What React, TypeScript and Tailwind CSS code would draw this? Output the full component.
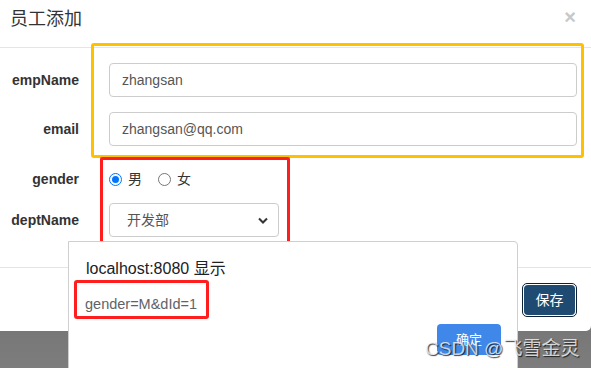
import React from "react";

const font = { fontFamily: '"Liberation Sans", "Noto Sans CJK SC", sans-serif' };

function Row({ label, children, h = 34, mb = 15 }: { label: string; children: React.ReactNode; h?: number; mb?: number }) {
  return (
    <div className="flex items-center" style={{ height: h, marginBottom: mb }}>
      <div className="w-[79px] text-right text-[14px] font-bold text-[#333]">{label}</div>
      <div className="ml-[30px] flex-1 h-full flex items-center">{children}</div>
    </div>
  );
}

export default function App() {
  return (
    <div className="relative w-[591px] h-[368px] overflow-hidden bg-gradient-to-b from-[#474747] to-[#7d7d7d]" style={font}>
      {/* modal */}
      <div className="w-[591px] h-[331px] bg-white rounded-br-[5px] flex flex-col">
        <div className="h-[48px] border-b border-[#e5e5e5] flex items-center justify-between pl-[10px] pr-[15px] pb-[10px]">
          <div className="text-[18px] text-[#333] leading-none">员工添加</div>
          <div className="text-[20px] font-bold text-[#c8c8c8] leading-none mb-[4px]">×</div>
        </div>
        <div className="pt-[15px] pr-[14px] h-[219px]">
          <Row label="empName">
            <div className="w-full h-[34px] border border-[#ccc] rounded-[4px] px-[12px] flex items-center text-[14px] text-[#555]">zhangsan</div>
          </Row>
          <Row label="email">
            <div className="w-full h-[34px] border border-[#ccc] rounded-[4px] px-[12px] flex items-center text-[14px] text-[#555]">zhangsan@qq.com</div>
          </Row>
          <Row label="gender" h={36} mb={6}>
            <div className="flex items-center gap-[6px] text-[14px] text-[#333]">
              <span className="w-[13px] h-[13px] rounded-full border-[1.5px] border-[#0075ff] flex items-center justify-center">
                <span className="w-[7px] h-[7px] rounded-full bg-[#0075ff]" />
              </span>
              <span className="mr-[10px]">男</span>
              <span className="w-[13px] h-[13px] rounded-full border border-[#767676]" />
              <span>女</span>
            </div>
          </Row>
          <Row label="deptName" mb={0}>
            <div className="w-[170px] h-[34px] border border-[#ccc] rounded-[4px] pl-[17px] pr-[10px] flex items-center justify-between text-[14px] text-[#555]">
              <span>开发部</span>
              <svg width="10" height="7" viewBox="0 0 10 7">
                <path d="M1 1.5 L5 5.5 L9 1.5" fill="none" stroke="#333" strokeWidth="2" />
              </svg>
            </div>
          </Row>
        </div>
        <div className="flex-1 border-t border-[#e5e5e5] flex items-start justify-end pt-[15px] pr-[14px]">
          <div className="w-[55px] h-[34px] rounded-[5px] border border-[#0d2236] p-[1px] bg-white">
            <div className="w-full h-full rounded-[4px] bg-[#1f4b73] flex items-center justify-center text-[14px] text-white">保存</div>
          </div>
        </div>
      </div>

      {/* annotation boxes */}
      <div className="absolute left-[91px] top-[43px] w-[493px] h-[115px] border-[3px] border-[#ffc000] rounded-[3px]" />
      <div className="absolute left-[100px] top-[157px] w-[190px] h-[87px] border-[3px] border-[#ff1e1e] rounded-[2px]" />

      {/* alert dialog */}
      <div className="absolute left-[68px] top-[241px] w-[450px] h-[140px] bg-white border border-[#cfcfcf] rounded-tr-[4px]">
        <div className="pl-[17px] pt-[19px] text-[16px] text-[#202124] leading-none">localhost:8080 显示</div>
        <div className="pl-[16px] pt-[20px] text-[14.5px] text-[#5f6368] leading-none">gender=M&amp;dId=1</div>
        <div className="absolute left-[368px] top-[82px] w-[64px] h-[31px] rounded-[4px] bg-[#3f88ea] flex items-center justify-center text-[13px] text-white">确定</div>
      </div>
      <div className="absolute left-[74px] top-[280px] w-[135px] h-[39px] border-[3px] border-[#ff1e1e] rounded-[3px]" />

      {/* watermark */}
      <div className="absolute left-[425px] top-[339px] text-[19px] leading-none text-white/75 [text-shadow:1px_1px_1px_rgba(0,0,0,0.75)]">CSDN @飞雪金灵</div>
    </div>
  );
}
